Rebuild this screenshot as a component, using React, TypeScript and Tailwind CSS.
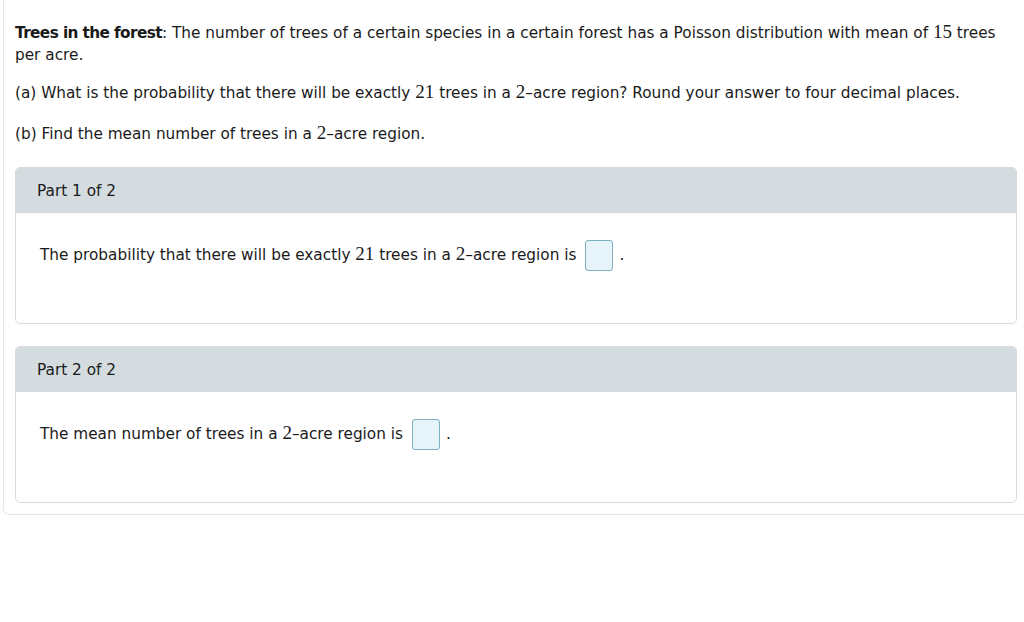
import React from "react";

const num = "font-['Liberation_Serif',serif] text-[19px] leading-none";

function AnswerBox() {
  return (
    <span className="ml-[9px] mr-[6px] inline-block h-[31px] w-[28px] shrink-0 rounded-[3px] border border-[#7eafc2] bg-[#e6f3f8]" />
  );
}

function Part({ label, children }: { label: string; children: React.ReactNode }) {
  return (
    <div className="overflow-hidden rounded-[5px] border border-[#d6dde1] bg-white">
      <div className="flex h-[45px] items-center bg-[#d4dce0] px-[21px] pt-[1px]">{label}</div>
      <div className="flex h-[110px] items-start px-[24px] pt-[27px]">
        <div className="flex h-[31px] items-center">{children}</div>
      </div>
    </div>
  );
}

export default function App() {
  return (
    <div className="h-[622px] bg-white font-['DejaVu_Sans',sans-serif] text-[15.3px] text-[#1a1a1a]">
      <div className="ml-[3px] rounded-bl-[6px] border-b border-l border-[#e3e6e8] pb-[11px] pl-[11px] pr-[7px] pt-[22px]">
        <p className="leading-[22px]">
          <b className="tracking-[-0.6px]">Trees in the forest</b>: The number of trees of a certain species in a
          certain forest has a Poisson distribution with mean of <span className={num}>15</span> trees per acre.
        </p>
        <p className="mt-[16px] leading-[22px]">
          (a) What is the probability that there will be exactly <span className={num}>21</span> trees in a{" "}
          <span className={num}>2</span>–acre region? Round your answer to four decimal places.
        </p>
        <p className="mt-[19px] leading-[22px]">
          (b) Find the mean number of trees in a <span className={num}>2</span>–acre region.
        </p>
        <div className="mt-[22px] flex flex-col gap-[22px]">
          <Part label="Part 1 of 2">
            <span>
              The probability that there will be exactly <span className={num}>21</span> trees in a{" "}
              <span className={num}>2</span>–acre region is
            </span>
            <AnswerBox />
            <span>.</span>
          </Part>
          <Part label="Part 2 of 2">
            <span>
              The mean number of trees in a <span className={num}>2</span>–acre region is
            </span>
            <AnswerBox />
            <span>.</span>
          </Part>
        </div>
      </div>
    </div>
  );
}
